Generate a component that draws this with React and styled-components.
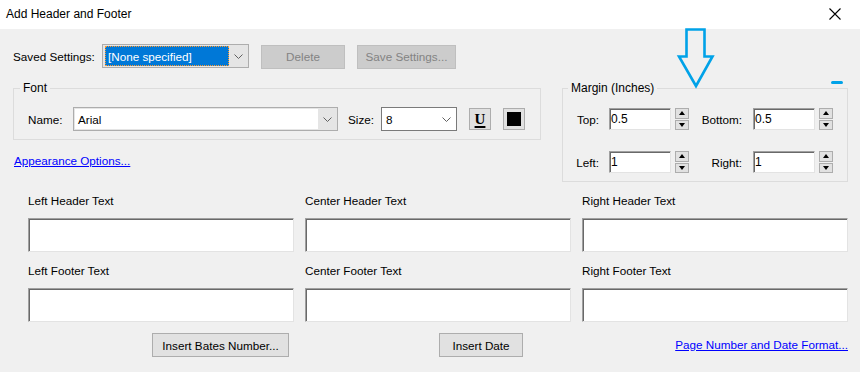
import React from "react";
import styled, { createGlobalStyle } from "styled-components";

const GlobalStyle = createGlobalStyle`
  html, body {
    margin: 0;
    padding: 0;
    background: #F0F0F0;
  }
  body {
    font-family: "Liberation Sans", Arial, sans-serif;
    font-size: 11.7px;
    color: #000000;
  }
`;

export default function App() {
  return (
    <>
      <GlobalStyle />
      <Janela>
        <BarraTitulo>
          <span>Add Header and Footer</span>
          <Fechar>
            <svg width="12" height="12" viewBox="0 0 12 12">
              <path d="M0.5 0.5 L11.5 11.5 M11.5 0.5 L0.5 11.5" stroke="#000" strokeWidth="1.1" fill="none" />
            </svg>
          </Fechar>
        </BarraTitulo>

        <Conteudo>
          <LinhaSalvos>
            <Rotulo largura={89}>Saved Settings:</Rotulo>
            <Combo largura={147}>
              <Selecionado>[None specified]</Selecionado>
              <Seta />
            </Combo>
            <BotaoDesativado largura={84}>Delete</BotaoDesativado>
            <BotaoDesativado largura={99}>Save Settings...</BotaoDesativado>
          </LinhaSalvos>

          <Topo>
            <ColunaFonte>
              <Grupo>
                <Legenda recuo={6}>Font</Legenda>
                <LinhaFonte>
                  <Rotulo largura={45}>Name:</Rotulo>
                  <Combo largura={265}>
                    <CampoCombo>Arial</CampoCombo>
                    <Seta />
                  </Combo>
                  <Rotulo largura={33}>Size:</Rotulo>
                  <ListaBranca>
                    <CampoCombo>8</CampoCombo>
                    <Seta />
                  </ListaBranca>
                  <BotaoQuadrado><Sublinhado>U</Sublinhado></BotaoQuadrado>
                  <BotaoQuadrado><Cor /></BotaoQuadrado>
                </LinhaFonte>
              </Grupo>
              <Link>Appearance Options...</Link>
            </ColunaFonte>

            <GrupoMargem>
              <Legenda recuo={5}>Margin (Inches)</Legenda>
              <LinhaMargem>
                <Campo rotulo="Top:" valor="0.5" largura={23} espaco={10} />
                <Campo rotulo="Bottom:" valor="0.5" largura={53} espaco={11} />
              </LinhaMargem>
              <LinhaMargem>
                <Campo rotulo="Left:" valor="1" largura={23} espaco={10} />
                <Campo rotulo="Right:" valor="1" largura={53} espaco={11} />
              </LinhaMargem>
            </GrupoMargem>
          </Topo>

          <GradeTextos>
            {["Left Header Text", "Center Header Text", "Right Header Text",
              "Left Footer Text", "Center Footer Text", "Right Footer Text"].map((t) => (
              <Celula key={t}>
                <RotuloTexto>{t}</RotuloTexto>
                <CaixaTexto />
              </Celula>
            ))}
          </GradeTextos>

          <Rodape>
            <Botao largura={137} recuo={139}>Insert Bates Number...</Botao>
            <Botao largura={84} recuo={150}>Insert Date</Botao>
            <LinkDireita>Page Number and Date Format...</LinkDireita>
          </Rodape>
        </Conteudo>

        <Anotacao width="40" height="64" viewBox="0 0 40 64">
          <path d="M10.5 2.5 L28.5 2.5 L28.5 29.5 L36.5 29.5 L20 59 L3 29.5 L10.5 29.5 Z"
            stroke="#00A2E8" strokeWidth="2.6" fill="none" strokeLinejoin="miter" />
        </Anotacao>
        <Traco />
      </Janela>
    </>
  );
}

function Campo({ rotulo, valor, largura, espaco }) {
  return (
    <CampoMargem>
      <Rotulo largura={largura} alinhar="right" espaco={espaco}>{rotulo}</Rotulo>
      <EntradaMargem defaultValue={valor} readOnly />
      <Giro>
        <MetadeGiro><Triangulo cima /></MetadeGiro>
        <MetadeGiro><Triangulo /></MetadeGiro>
      </Giro>
    </CampoMargem>
  );
}

function Seta() {
  return (
    <AreaSeta>
      <svg width="9" height="5" viewBox="0 0 9 5">
        <polyline points="0.5,0.5 4.5,4.5 8.5,0.5" stroke="#606060" strokeWidth="1" fill="none" />
      </svg>
    </AreaSeta>
  );
}

const Janela = styled.div`
  position: relative;
  width: 860px;
  height: 372px;
  background: #F0F0F0;
  overflow: hidden;
`;

const BarraTitulo = styled.div`
  height: 29px;
  background: #FFFFFF;
  display: flex;
  align-items: center;
  justify-content: space-between;
  padding-left: 6px;
  padding-right: 19px;
  box-sizing: border-box;
  span {
    font-size: 12px;
    margin-top: -1px;
  }
`;

const Fechar = styled.div`
  display: flex;
  margin-top: -2px;
`;

const Conteudo = styled.div`
  padding: 15px 12px 0 13px;
`;

const LinhaSalvos = styled.div`
  display: flex;
  align-items: center;
  height: 24px;
  gap: 12px;
  & > :first-child {
    margin-right: -12px;
  }
`;

const Rotulo = styled.span`
  width: ${(p) => p.largura}px;
  flex-shrink: 0;
  text-align: ${(p) => p.alinhar || "left"};
  margin-right: ${(p) => p.espaco || 0}px;
  white-space: nowrap;
`;

const Combo = styled.div`
  width: ${(p) => p.largura}px;
  height: 24px;
  box-sizing: border-box;
  border: 1px solid #ADADAD;
  background: #E5E5E5;
  display: flex;
  align-items: stretch;
  flex-shrink: 0;
`;

const Selecionado = styled.div`
  flex: 1;
  margin: 1px 0 1px 2px;
  background: #0078D7;
  color: #FFFFFF;
  outline: 1px dotted #FF9A2E;
  outline-offset: -1px;
  padding-left: 3px;
  display: flex;
  align-items: center;
`;

const CampoCombo = styled.div`
  flex: 1;
  background: #FFFFFF;
  margin: 1px 0 1px 1px;
  padding-left: 3px;
  display: flex;
  align-items: center;
`;

const ListaBranca = styled(Combo)`
  width: 76px;
  border-color: #7A7A7A;
  background: #FFFFFF;
`;

const AreaSeta = styled.div`
  width: 19px;
  display: flex;
  align-items: center;
  justify-content: center;
  padding-top: 1px;
`;

const BotaoDesativado = styled.div`
  width: ${(p) => p.largura}px;
  height: 24px;
  box-sizing: border-box;
  background: #CCCCCC;
  border: 1px solid #BFBFBF;
  color: #838383;
  display: flex;
  align-items: center;
  justify-content: center;
  margin-top: 1px;
`;

const Topo = styled.div`
  display: flex;
  gap: 21px;
  margin-top: 13px;
`;

const ColunaFonte = styled.div`
  width: 528px;
  display: flex;
  flex-direction: column;
  align-items: flex-start;
`;

const Grupo = styled.fieldset`
  width: 528px;
  box-sizing: border-box;
  margin: 0;
  padding: 0;
  border: 1px solid #DCDCDC;
  border-radius: 0;
`;

const Legenda = styled.legend`
  margin-left: ${(p) => p.recuo}px;
  padding: 0 3px;
  line-height: 14px;
  font-size: 12px;
`;

const LinhaFonte = styled.div`
  display: flex;
  align-items: center;
  padding: 12px 0 8px 14px;
  gap: 10px;
  & > :nth-child(1) { margin-right: -10px; }
  & > :nth-child(3) { margin-right: -10px; }
  & > :nth-child(4) { margin-right: 2px; }
  & > :nth-child(5) { margin-right: 2px; }
`;

const BotaoQuadrado = styled.div`
  width: 22px;
  height: 22px;
  box-sizing: border-box;
  background: #E1E1E1;
  border: 1px solid #ADADAD;
  display: flex;
  align-items: center;
  justify-content: center;
`;

const Sublinhado = styled.span`
  font-family: "Liberation Serif", "Times New Roman", serif;
  font-weight: bold;
  font-size: 15px;
  line-height: 15px;
  text-decoration: underline;
  text-decoration-thickness: 2px;
  text-underline-offset: 2px;
`;

const Cor = styled.div`
  width: 14px;
  height: 14px;
  background: #000000;
`;

const Link = styled.a`
  color: #0000FF;
  text-decoration: underline;
  line-height: 14px;
  margin-top: 14px;
  margin-left: 1px;
  cursor: pointer;
`;

const GrupoMargem = styled(Grupo)`
  width: 287px;
  height: 101px;
`;

const LinhaMargem = styled.div`
  display: flex;
  align-items: center;
  padding-left: 13px;
  margin-top: 13px;
  & + & {
    margin-top: 21px;
  }
`;

const CampoMargem = styled.div`
  display: flex;
  align-items: center;
`;

const EntradaMargem = styled.input`
  width: 62px;
  height: 22px;
  box-sizing: border-box;
  font-family: inherit;
  font-size: 12px;
  padding: 0 0 0 1px;
  margin: 0 4px 0 0;
  background: #FFFFFF;
  border-style: solid;
  border-width: 1px;
  border-color: #A0A0A0 #E3E3E3 #E3E3E3 #A0A0A0;
  box-shadow: inset 1px 1px 0 #696969;
  outline: none;
  color: #000;
`;

const Giro = styled.div`
  width: 14px;
  height: 22px;
  display: flex;
  flex-direction: column;
  gap: 1px;
`;

const MetadeGiro = styled.div`
  flex: 1;
  box-sizing: border-box;
  background: #E1E1E1;
  border: 1px solid #ADADAD;
  display: flex;
  align-items: center;
  justify-content: center;
`;

const Triangulo = styled.div`
  width: 0;
  height: 0;
  border-left: 3.5px solid transparent;
  border-right: 3.5px solid transparent;
  ${(p) => (p.cima ? "border-bottom: 4px solid #000;" : "border-top: 4px solid #000;")}
`;

const GradeTextos = styled.div`
  display: grid;
  grid-template-columns: repeat(3, 266px);
  column-gap: 11px;
  row-gap: 11px;
  padding-left: 15px;
  margin-top: 11px;
`;

const Celula = styled.div`
  display: flex;
  flex-direction: column;
  gap: 9px;
`;

const RotuloTexto = styled.span`
  line-height: 16px;
`;

const CaixaTexto = styled.div`
  height: 34px;
  box-sizing: border-box;
  background: #FFFFFF;
  border-style: solid;
  border-width: 1px;
  border-color: #A0A0A0 #E3E3E3 #E3E3E3 #A0A0A0;
  box-shadow: inset 1px 1px 0 #696969;
`;

const Rodape = styled.div`
  display: flex;
  align-items: center;
  margin-top: 11px;
  height: 24px;
`;

const Botao = styled.div`
  width: ${(p) => p.largura}px;
  margin-left: ${(p) => p.recuo}px;
  height: 24px;
  box-sizing: border-box;
  background: #E1E1E1;
  border: 1px solid #ADADAD;
  display: flex;
  align-items: center;
  justify-content: center;
`;

const LinkDireita = styled(Link)`
  margin: -1px 0 0 auto;
`;

const Anotacao = styled.svg`
  position: absolute;
  left: 676px;
  top: 27px;
`;

const Traco = styled.div`
  position: absolute;
  left: 831px;
  top: 81px;
  width: 12px;
  height: 3px;
  border-radius: 2px;
  background: #00A2E8;
`;
